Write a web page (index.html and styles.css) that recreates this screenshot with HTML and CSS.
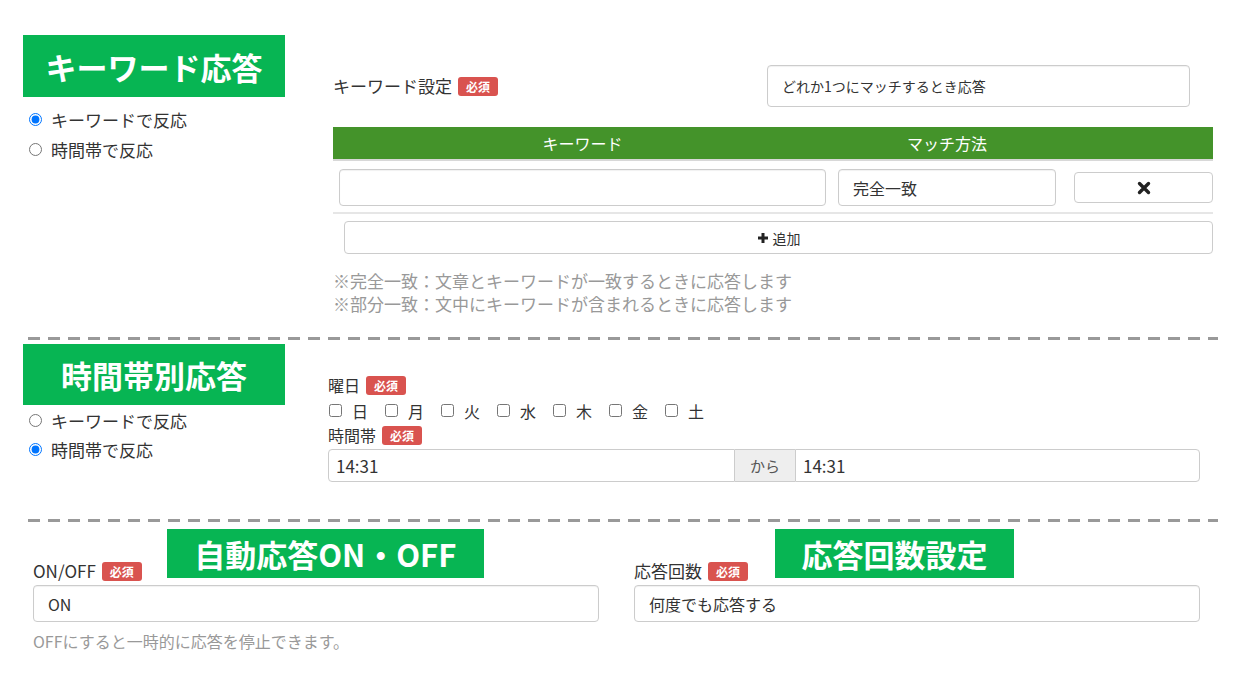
FILE: index.html
```html
<!DOCTYPE html>
<html lang="ja">
<head>
<meta charset="utf-8">
<link rel="stylesheet" href="styles.css">
</head>
<body>
<div class="page">
  <section class="sec sec1">
    <div class="left">
      <div class="tag tag-big">キーワード応答</div>
      <div class="radios radios1">
        <label class="radio"><input type="radio" name="r1" checked><span>キーワードで反応</span></label>
        <label class="radio"><input type="radio" name="r1"><span>時間帯で反応</span></label>
      </div>
    </div>
    <div class="right right1">
      <div class="toprow">
        <div class="lbl">キーワード設定<span class="badge">必須</span></div>
        <div class="box box-top">どれか1つにマッチするとき応答</div>
      </div>
      <div class="kwtable">
        <div class="th">キーワード</div>
        <div class="th">マッチ方法</div>
        <div class="th"></div>
        <div class="td"><div class="box box-input"></div></div>
        <div class="td"><div class="box box-match">完全一致</div></div>
        <div class="td td-btn"><div class="btn btn-del"><svg width="14" height="14" viewBox="0 0 14 14"><path d="M2.5 2.5 L11.5 11.5 M11.5 2.5 L2.5 11.5" stroke="#222" stroke-width="3.4" stroke-linecap="round"/></svg></div></div>
      </div>
      <div class="btn btn-add"><svg width="12" height="12" viewBox="0 0 12 12"><path d="M6 1 V11 M1 6 H11" stroke="#222" stroke-width="3"/></svg><span>追加</span></div>
      <div class="notes">
        <p>※完全一致：文章とキーワードが一致するときに応答します</p>
        <p>※部分一致：文中にキーワードが含まれるときに応答します</p>
      </div>
    </div>
  </section>
  <div class="dash dash1"></div>
  <section class="sec sec2">
    <div class="left">
      <div class="tag tag-big tag2">時間帯別応答</div>
      <div class="radios radios2">
        <label class="radio"><input type="radio" name="r2"><span>キーワードで反応</span></label>
        <label class="radio"><input type="radio" name="r2" checked><span>時間帯で反応</span></label>
      </div>
    </div>
    <div class="right right2">
      <div class="lbl lbl-row">曜日<span class="badge">必須</span></div>
      <div class="days">
        <label class="day"><input type="checkbox"><span>日</span></label>
        <label class="day"><input type="checkbox"><span>月</span></label>
        <label class="day"><input type="checkbox"><span>火</span></label>
        <label class="day"><input type="checkbox"><span>水</span></label>
        <label class="day"><input type="checkbox"><span>木</span></label>
        <label class="day"><input type="checkbox"><span>金</span></label>
        <label class="day"><input type="checkbox"><span>土</span></label>
      </div>
      <div class="lbl lbl-row">時間帯<span class="badge">必須</span></div>
      <div class="igroup">
        <div class="ig-input ig-first">14:31</div>
        <div class="ig-addon">から</div>
        <div class="ig-input ig-last">14:31</div>
      </div>
    </div>
  </section>
  <div class="dash dash2"></div>
  <section class="sec sec3">
    <div class="col col-a">
      <div class="headrow">
        <div class="lbl">ON/OFF<span class="badge">必須</span></div>
        <div class="tag tag-mid tag-onoff">自動応答ON・OFF</div>
      </div>
      <div class="box box-sel">ON</div>
      <p class="help">OFFにすると一時的に応答を停止できます。</p>
    </div>
    <div class="col col-b">
      <div class="headrow">
        <div class="lbl">応答回数<span class="badge">必須</span></div>
        <div class="tag tag-mid tag-count">応答回数設定</div>
      </div>
      <div class="box box-sel box-count">何度でも応答する</div>
    </div>
  </section>
</div>
</body>
</html>
```
FILE: styles.css
```css
* { box-sizing: border-box; }
html, body { margin: 0; padding: 0; background: #fff; }
body {
  font-family: "Noto Sans CJK JP", "Noto Sans", sans-serif;
  color: #333;
  font-size: 17px;
}
p { margin: 0; }
.page { padding: 35px 37px 0 23px; width: 1255px; }

.sec { display: flex; }
.left { width: 310px; flex: none; }

.tag {
  background: #07b553;
  color: #fff;
  font-weight: bold;
  font-size: 31px;
  display: flex;
  align-items: center;
  justify-content: center;
  line-height: 1;
}
.tag-big { width: 262px; height: 62px; }
.tag2 { height: 61px; }

.radios { padding-left: 5px; }
.radios1 { margin-top: 7px; }
.radios2 { margin-top: 1px; }
.radio {
  display: flex;
  align-items: center;
  height: 30px;
  font-size: 17px;
  color: #333;
}
.radios2 .radio { height: 29px; }
.radio input { margin: 0 9px 0 1px; width: 13px; height: 13px; }

.lbl { display: flex; align-items: center; font-size: 17px; color: #333; line-height: 22px; }
.badge {
  display: inline-block;
  background: #d9534f;
  color: #fff;
  font-size: 12px;
  font-weight: bold;
  line-height: 19px;
  height: 19px;
  padding: 0 8px;
  border-radius: 3px;
  margin-left: 6px;
}

.box {
  border: 1px solid #ccc;
  border-radius: 4px;
  background: #fff;
  font-size: 14px;
  color: #333;
  display: flex;
  align-items: center;
  box-shadow: inset 0 1px 1px rgba(0,0,0,0.06);
}

/* section 1 right */
.right1 { width: 880px; margin-top: 30px; }
.toprow { display: flex; align-items: center; justify-content: space-between; padding-right: 23px; }
.box-top { width: 423px; height: 42px; padding-left: 14px; font-size: 14px; }

.kwtable {
  margin-top: 20px;
  display: grid;
  grid-template-columns: 499px 230px 151px;
}
.th {
  background: #44932a;
  color: #fff;
  font-size: 16px;
  height: 34px;
  display: flex;
  align-items: center;
  justify-content: center;
  border-bottom: 2px solid #d8d8d8;
}
.td {
  padding: 8px 6px 7px;
  border-bottom: 2px solid #e6e6e6;
  height: 53px;
}
.box-input { height: 37px; width: 100%; }
.box-match { height: 37px; width: 100%; padding-left: 14px; font-size: 16px; }
.td-btn { padding: 11px 0 9px 12px; }

.btn {
  border: 1px solid #ccc;
  border-radius: 4px;
  background: #fff;
  display: flex;
  align-items: center;
  justify-content: center;
  color: #333;
}
.btn-del { height: 31px; width: 100%; }
.btn-add {
  margin: 7px 0 0 11px;
  height: 33px;
  width: 869px;
  font-size: 14px;
  gap: 4px;
}

.notes { margin-top: 15px; color: #999; font-size: 17px; line-height: 23px; }

.dash {
  height: 3px;
  margin-left: 5px;
  width: 1190px;
  background: repeating-linear-gradient(to right, #999 0 12px, transparent 12px 20px);
}
.dash1 { margin-top: 22px; margin-bottom: 4px; }

/* section 2 */
.right2 { margin-top: 29px; margin-left: -5px; width: 872px; }
.lbl-row { height: 25px; line-height: 25px; font-size: 16px; }
.lbl-row .badge { margin-left: 6px; }
.days { display: flex; height: 25px; align-items: center; }
.day { display: flex; align-items: center; width: 56px; font-size: 16px; }
.day input { margin: 0 10px 0 1px; width: 13px; height: 13px; }
.igroup { display: flex; height: 33px; margin-top: 1px; }
.ig-input {
  border: 1px solid #ccc;
  display: flex;
  align-items: center;
  padding-left: 7px;
  font-size: 17px;
  color: #333;
  background: #fff;
}
.ig-first { width: 407px; border-radius: 4px 0 0 4px; }
.ig-last { flex: 1; border-radius: 0 4px 4px 0; }
.ig-addon {
  width: 60px;
  background: #eee;
  border-top: 1px solid #ccc;
  border-bottom: 1px solid #ccc;
  display: flex;
  align-items: center;
  justify-content: center;
  font-size: 15px;
  color: #555;
}
.dash2 { margin-top: 37px; }

/* section 3 */
.sec3 { margin-top: 7px; padding-left: 10px; gap: 35px; }
.col { width: 566px; }
.headrow { display: flex; align-items: flex-end; }
.tag-mid { height: 49px; margin-bottom: 4px; font-size: 31px; }
.tag-onoff { width: 317px; margin-left: 25px; }
.tag-count { width: 239px; margin-left: 27px; }
.box-sel { margin-top: 3px; height: 37px; padding-left: 14px; font-size: 16px; }
.help { margin-top: 8px; color: #999; font-size: 16px; line-height: 22px; }
```
